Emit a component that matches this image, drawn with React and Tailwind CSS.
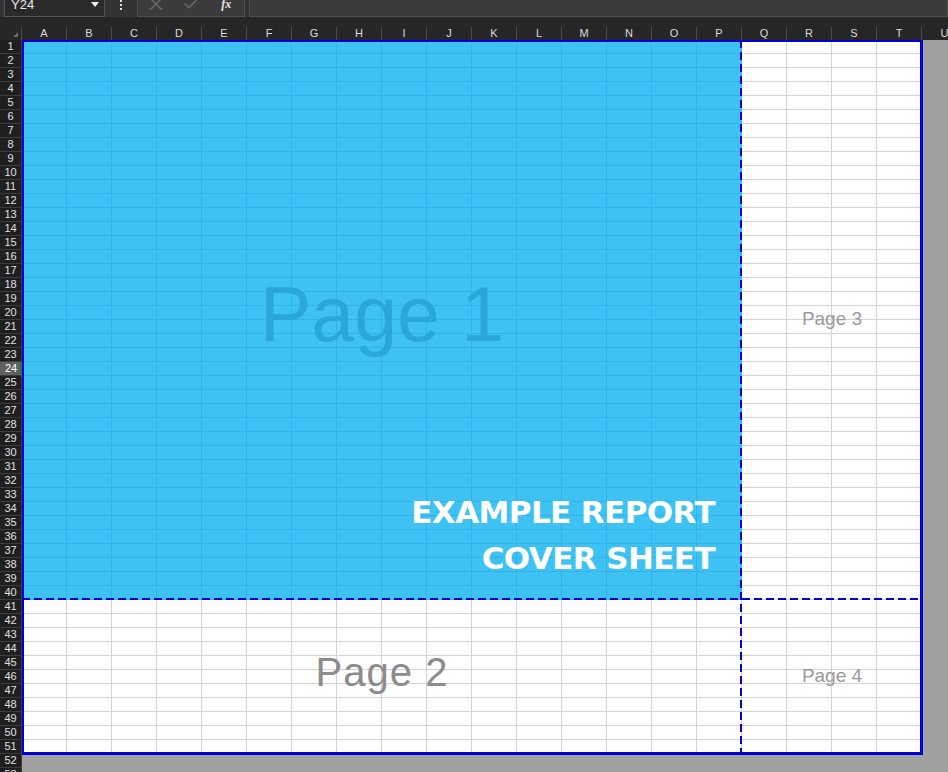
import React from 'react';
import { X, Check } from 'lucide-react';

const COLS = 'ABCDEFGHIJKLMNOPQRST'.split('');
const ROWS = Array.from({ length: 51 }, (_, i) => i + 1);
const ACTIVE_ROW = 24;

// cover sheet fill: A1:P40
const isFilled = (r, c) => r <= 40 && c < 16;

function Toolbar() {
  return (
    <div className="h-[17px] overflow-hidden bg-[#333333]">
      <div className="flex h-[26px] -mt-[9px] items-center">
        <div className="ml-[4px] flex h-[25px] w-[101px] items-center justify-between border border-[#555555] bg-[#2a2a2a] pl-[6px] pr-[5px]">
          <span className="text-[13px] leading-none text-[#e8e8e8]">Y24</span>
          <span className="h-0 w-0 border-l-[4px] border-r-[4px] border-t-[5px] border-l-transparent border-r-transparent border-t-[#f0f0f0]" />
        </div>
        <div className="flex w-[32px] flex-col items-center gap-[2px] pt-[2px]">
          <span className="h-[2px] w-[2px] bg-[#dddddd]" />
          <span className="h-[2px] w-[2px] bg-[#dddddd]" />
          <span className="h-[2px] w-[2px] bg-[#dddddd]" />
        </div>
        <div className="flex h-[25px] w-[108px] items-center border border-[#505050] bg-[#3b3b3b]">
          <div className="flex w-[36px] justify-center text-[#6a6a6a]">
            <X size={22} strokeWidth={1.6} />
          </div>
          <div className="flex w-[36px] justify-center text-[#6a6a6a]">
            <Check size={18} strokeWidth={2} />
          </div>
          <div className="flex w-[36px] justify-center">
            <span className="font-['Liberation_Serif'] text-[12px] font-bold italic leading-none text-[#e6e6e6]">fx</span>
          </div>
        </div>
        <div className="ml-[4px] h-[25px] flex-1 border border-[#505050] bg-[#3b3b3b]" />
      </div>
    </div>
  );
}

function ColumnHeaders() {
  return (
    <div className="mt-[10px] flex h-[13px] bg-[#262626] text-[11px] leading-none text-[#dcdcdc]">
      <div className="flex w-[22px] shrink-0 items-end justify-end border-r border-[#4a4a4a] pb-[3px] pr-[3px]">
        <span className="h-0 w-0 border-b-[5px] border-l-[5px] border-b-[#6a6a6a] border-l-transparent" />
      </div>
      {COLS.map((c) => (
        <div key={c} className="flex w-[45px] shrink-0 items-center justify-center border-r border-[#4a4a4a]">
          {c}
        </div>
      ))}
      <div className="flex w-[45px] shrink-0 items-center justify-center">U</div>
    </div>
  );
}

function RowHeaders() {
  const rows = Array.from({ length: 53 }, (_, i) => i + 1);
  return (
    <div className="w-[22px] shrink-0 bg-[#1f1f1f] text-[11px] leading-none text-[#e0e0e0]">
      {rows.map((r) => (
        <div
          key={r}
          className={
            r === ACTIVE_ROW
              ? 'flex h-[14px] items-center justify-center border-b border-r-2 border-b-[#3c3c3c] border-r-[#1f7a45] bg-[#606060] pl-[2px] text-white'
              : 'flex h-[14px] items-center justify-center border-b border-r border-b-[#3c3c3c] border-r-[#3c3c3c]'
          }
        >
          {r}
        </div>
      ))}
    </div>
  );
}

function PageLabel({ className, children }) {
  return (
    <div className={`pointer-events-none absolute flex items-center justify-center font-['Liberation_Sans'] ${className}`}>
      {children}
    </div>
  );
}

function Sheet() {
  return (
    <div className="relative flex-1 overflow-hidden bg-[#a0a0a0]">
      <div className="relative w-[900px]">
        <div className="grid grid-cols-[repeat(20,45px)] auto-rows-[14px]">
          {ROWS.map((r) =>
            COLS.map((c, ci) => (
              <div
                key={`${c}${r}`}
                className={
                  isFilled(r, ci)
                    ? 'border-b border-r border-[#30b3e6] bg-[#3ec2f3]'
                    : 'border-b border-r border-[#d4d4d4] bg-white'
                }
              />
            ))
          )}
        </div>

        {/* page watermarks */}
        <PageLabel className="left-0 top-0 h-[560px] w-[720px]">
          <span className="mb-[12px] text-[77px] leading-none text-[#28a7d8]">Page 1</span>
        </PageLabel>
        <PageLabel className="left-0 top-[560px] h-[154px] w-[720px]">
          <span className="mb-[10px] text-[40px] leading-none tracking-[1px] text-[#8c8c8c]">Page 2</span>
        </PageLabel>
        <PageLabel className="left-[720px] top-0 h-[560px] w-[180px]">
          <span className="mb-[4px] text-[19px] leading-none text-[#9a9a9a]">Page 3</span>
        </PageLabel>
        <PageLabel className="left-[720px] top-[560px] h-[154px] w-[180px]">
          <span className="mb-[4px] text-[19px] leading-none text-[#9a9a9a]">Page 4</span>
        </PageLabel>

        {/* cover title */}
        <div className="absolute right-[207px] top-[449px] text-right font-['DejaVu_Sans'] text-[31px] font-bold leading-[46px] tracking-[-0.6px] text-white">
          <div>EXAMPLE REPORT</div>
          <div>COVER SHEET</div>
        </div>

        {/* page breaks */}
        <div className="absolute left-0 top-[558px] h-[2px] w-[898px] bg-[repeating-linear-gradient(90deg,#0000d4_0px,#0000d4_8px,transparent_8px,transparent_12px)]" />
        <div className="absolute left-[718px] top-0 h-[712px] w-[2px] bg-[repeating-linear-gradient(180deg,#0000d4_0px,#0000d4_8px,transparent_8px,transparent_12px)]" />

        {/* print area */}
        <div className="pointer-events-none absolute left-0 top-0 h-[715px] w-[901px] border-b-[3px] border-l-2 border-r-[3px] border-t-2 border-[#0000d4]" />
      </div>
    </div>
  );
}

export default function App() {
  return (
    <div className="h-[772px] w-[948px] overflow-hidden bg-[#262626] font-['Liberation_Sans']">
      <Toolbar />
      <ColumnHeaders />
      <div className="flex h-[732px]">
        <RowHeaders />
        <Sheet />
      </div>
    </div>
  );
}
